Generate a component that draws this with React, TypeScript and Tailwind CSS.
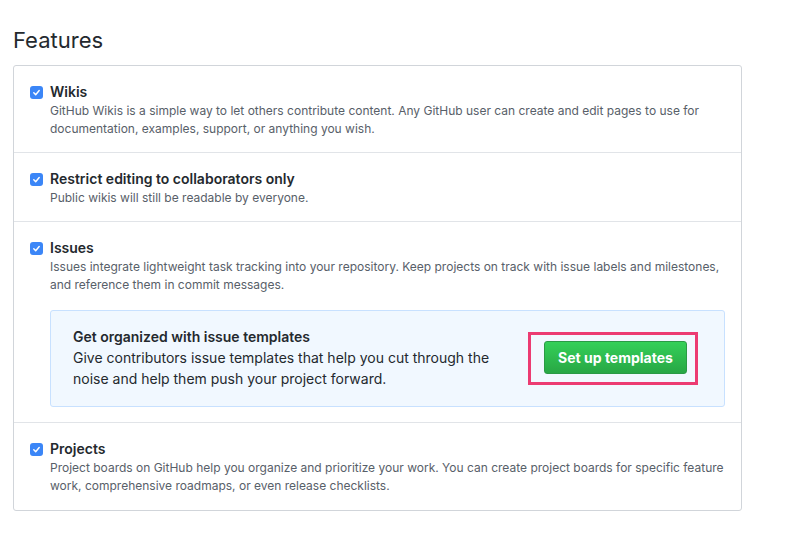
const FONT = { fontFamily: 'Inter, "Liberation Sans", Arial, sans-serif' }

function Check() {
  return (
    <span className="mt-[4px] flex h-[13px] w-[13px] shrink-0 items-center justify-center rounded-[3px] bg-[#3b86f7]">
      <svg width="9" height="9" viewBox="0 0 10 10" fill="none">
        <path d="M2 5.3 4.1 7.4 8 2.8" stroke="#fff" strokeWidth="1.6" strokeLinecap="round" strokeLinejoin="round" />
      </svg>
    </span>
  )
}

function Feature({
  title,
  desc,
  pb = 'pb-[14px]',
  children,
}: {
  title: string
  desc: string
  pb?: string
  children?: React.ReactNode
}) {
  return (
    <div className={`border-t border-[#e1e4e8] px-4 pt-4 first:border-t-0 ${pb}`}>
      <div className="flex gap-[7px]">
        <Check />
        <div className="flex-1">
          <div className="text-[14px] leading-[20px] font-semibold text-[#24292e]">{title}</div>
          <p className="text-[12px] leading-[18px] text-[#586069]">{desc}</p>
        </div>
      </div>
      {children}
    </div>
  )
}

export default function App() {
  return (
    <div className="min-h-[535px] bg-white pt-[25px] pl-[13px]" style={FONT}>
      <h2 className="mb-[10px] text-[22px] leading-[30px] font-normal text-[#24292e]">Features</h2>
      <div className="w-[729px] rounded-[3px] border border-[#d1d5da]">
        <Feature
          title="Wikis"
          desc="GitHub Wikis is a simple way to let others contribute content. Any GitHub user can create and edit pages to use for documentation, examples, support, or anything you wish."
        />
        <Feature title="Restrict editing to collaborators only" desc="Public wikis will still be readable by everyone." />
        <Feature
          title="Issues"
          pb="pb-[15px]"
          desc="Issues integrate lightweight task tracking into your repository. Keep projects on track with issue labels and milestones, and reference them in commit messages."
        >
          <div className="mt-4 ml-[20px] flex items-center justify-between rounded-[3px] border border-[#c8e1ff] bg-[#f1f8ff] pt-[16px] pb-[17px] pr-[26px] pl-[22px]">
            <div className="w-[430px]">
              <div className="text-[14px] leading-[20px] font-semibold text-[#24292e]">Get organized with issue templates</div>
              <p className="text-[14px] leading-[21px] text-[#24292e]">
                Give contributors issue templates that help you cut through the noise and help them push your project forward.
              </p>
            </div>
            <div className="border-[3px] border-[#ec3b72] pt-[6px] pr-[8px] pb-[8px] pl-[13px]">
              <button className="h-[33px] w-[143px] rounded-[3px] border border-[#2a9a45] bg-gradient-to-b from-[#34d058] to-[#28a745] text-[14px] font-bold text-white">
                Set up templates
              </button>
            </div>
          </div>
        </Feature>
        <Feature
          title="Projects"
          pb="pb-[15px]"
          desc="Project boards on GitHub help you organize and prioritize your work. You can create project boards for specific feature work, comprehensive roadmaps, or even release checklists."
        />
      </div>
    </div>
  )
}
